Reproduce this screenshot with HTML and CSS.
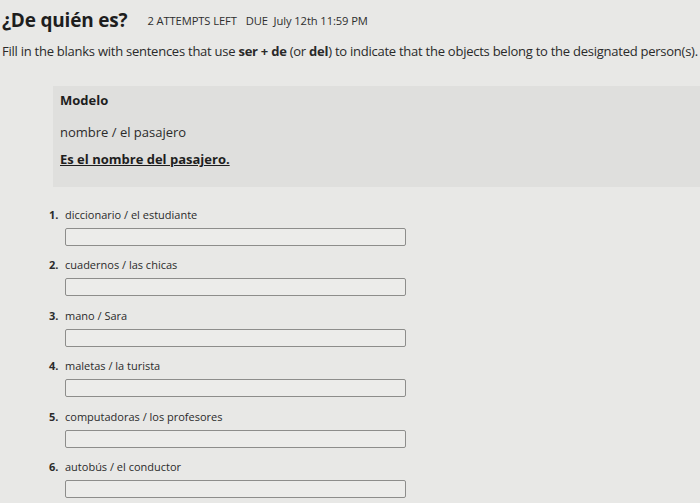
FILE: index.html
```html
<!DOCTYPE html>
<html lang="es">
<head>
<meta charset="utf-8">
<link rel="stylesheet" href="styles.css">
</head>
<body>
<div class="page">
  <header class="head">
    <h1 class="title">¿De quién es?</h1>
    <span class="meta">2 ATTEMPTS LEFT</span>
    <span class="meta">DUE&nbsp; July 12th 11:59 PM</span>
  </header>
  <p class="instr">Fill in the blanks with sentences that use <b>ser + de</b> (or <b>del</b>) to indicate that the objects belong to the designated person(s).</p>
  <section class="model">
    <div class="model-title">Modelo</div>
    <div class="model-prompt">nombre / el pasajero</div>
    <div class="model-answer">Es el nombre del pasajero.</div>
  </section>
  <ol class="items">
    <li class="item"><div class="prompt"><span class="num">1.</span>diccionario / el estudiante</div><div class="field"></div></li>
    <li class="item"><div class="prompt"><span class="num">2.</span>cuadernos / las chicas</div><div class="field"></div></li>
    <li class="item"><div class="prompt"><span class="num">3.</span>mano / Sara</div><div class="field"></div></li>
    <li class="item"><div class="prompt"><span class="num">4.</span>maletas / la turista</div><div class="field"></div></li>
    <li class="item"><div class="prompt"><span class="num">5.</span>computadoras / los profesores</div><div class="field"></div></li>
    <li class="item"><div class="prompt"><span class="num">6.</span>autobús / el conductor</div><div class="field"></div></li>
  </ol>
</div>
</body>
</html>
```
FILE: styles.css
```css
html, body {
  margin: 0;
  padding: 0;
  background: #e8e8e6;
}
body {
  font-family: "Open Sans", "DejaVu Sans", sans-serif;
  color: #2b2b2b;
  overflow: hidden;
}
.page {
  padding: 0 0 0 2px;
}
.head {
  display: flex;
  align-items: center;
  gap: 9px;
  padding-top: 7px;
  height: 27px;
}
.title {
  margin: 0 11px 0 0;
  font-size: 19px;
  font-weight: 700;
  color: #1e1e1e;
  line-height: 27px;
  letter-spacing: -0.2px;
}
.meta {
  font-size: 11.2px;
  color: #2e2e2e;
  letter-spacing: -0.1px;
}
.instr {
  margin: 8px 0 0 0;
  font-size: 13px;
  line-height: 18px;
  color: #2a2a2a;
  white-space: nowrap;
  letter-spacing: -0.25px;
}
.instr b {
  font-weight: 700;
}
.model {
  margin: 26px 0 0 51px;
  background: #dfdfdd;
  height: 101px;
  padding: 5px 0 0 7px;
  box-sizing: border-box;
}
.model-title {
  font-size: 13px;
  font-weight: 700;
  line-height: 18px;
  color: #1e1e1e;
}
.model-prompt {
  margin-top: 14px;
  font-size: 13px;
  line-height: 18px;
}
.model-answer {
  margin-top: 9px;
  font-size: 13px;
  line-height: 18px;
  font-weight: 700;
  text-decoration: underline;
  color: #1e1e1e;
}
.items {
  list-style: none;
  margin: 20px 0 0 0;
  padding: 0 0 0 47px;
}
.item {
  height: 50.4px;
}
.prompt {
  font-size: 11px;
  line-height: 16px;
  display: flex;
  color: #2b2b2b;
}
.num {
  width: 16px;
  font-weight: 700;
}
.field {
  margin: 5px 0 0 16px;
  width: 339px;
  height: 16px;
  border: 1px solid #8d8d8b;
  border-radius: 2px;
  background: #ececea;
}
```
